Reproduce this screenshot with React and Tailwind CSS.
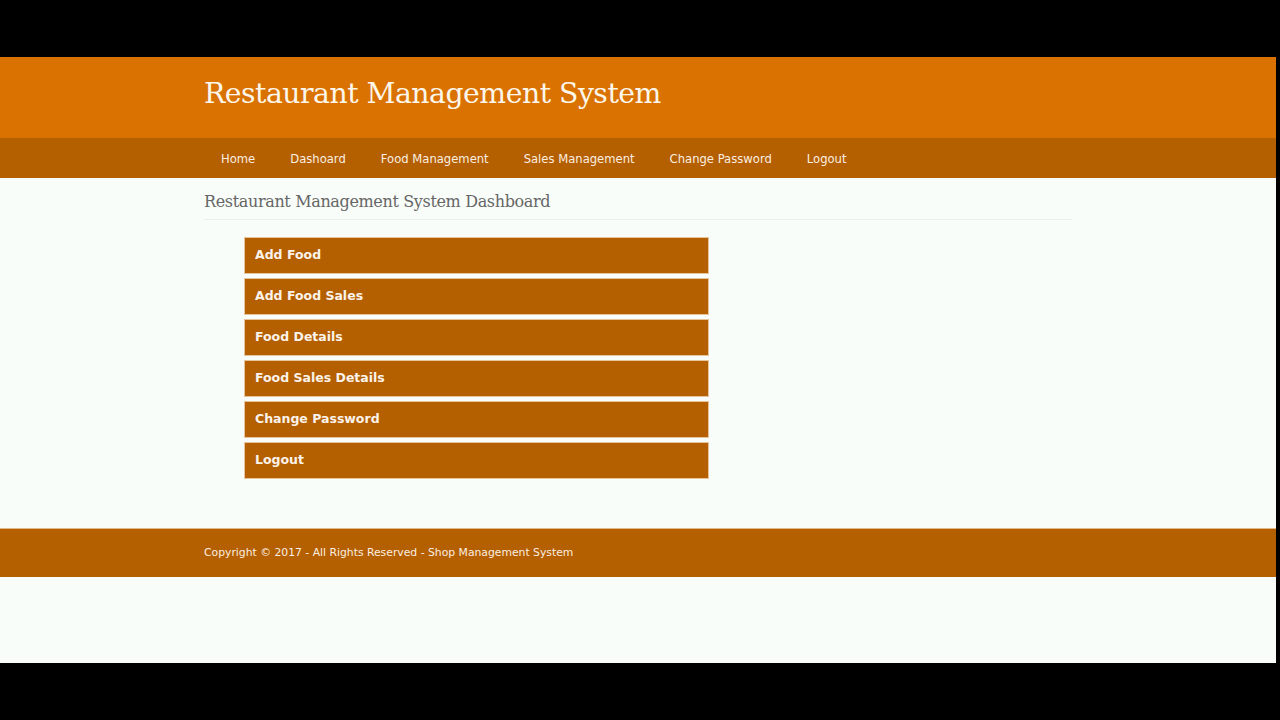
const navLinks = ["Home", "Dashoard", "Food Management", "Sales Management", "Change Password", "Logout"];

const menuItems = ["Add Food", "Add Food Sales", "Food Details", "Food Sales Details", "Change Password", "Logout"];

const App = () => {
  return (
    <div className="h-[720px] bg-black flex flex-col">
      <div className="h-[57px]" />
      <div className="w-[1276px] h-[606px] bg-[#f8fdfa] flex flex-col">
        <header className="h-[81px] bg-[#d97200] flex items-center">
          <div className="w-[868px] mx-auto">
            <h1 className="text-[28.3px] text-[#fdf6ea] font-['DejaVu_Serif',Georgia,serif] tracking-[-0.5px] pb-[6px]">
              Restaurant Management System
            </h1>
          </div>
        </header>
        <nav className="h-[40px] bg-[#b45f00]">
          <ul className="w-[868px] mx-auto flex h-full items-center pt-[3px] pl-[17px] gap-[35px] font-['DejaVu_Sans',Verdana,sans-serif] text-[11.6px] text-[#fbeee0]">
            {navLinks.map((link) => (
              <li key={link}>
                <a href="#">{link}</a>
              </li>
            ))}
          </ul>
        </nav>
        <main className="h-[350px]">
          <div className="w-[868px] mx-auto pt-[12px]">
            <h2 className="text-[16px] text-[#666] font-['DejaVu_Serif',Georgia,serif] tracking-[-0.35px] pb-[5px] border-b border-[#ebefed]">
              Restaurant Management System Dashboard
            </h2>
            <div className="ml-[40px] mt-[17px] w-[465px] flex flex-col gap-[4px]">
              {menuItems.map((item) => (
                <a
                  key={item}
                  href="#"
                  className="h-[37px] flex items-center pl-[10px] bg-[#b45f00] border border-[#e8c49c] text-[#fbf3ea] font-bold text-[12.5px] font-['DejaVu_Sans',Verdana,sans-serif]"
                >
                  {item}
                </a>
              ))}
            </div>
          </div>
        </main>
        <footer className="h-[49px] bg-[#b45f00] border-t border-[#e4b98a] flex items-center">
          <div className="w-[868px] mx-auto text-[10.8px] text-[#fbeee0] font-['DejaVu_Sans',Verdana,sans-serif]">
            Copyright © 2017 - All Rights Reserved - Shop Management System
          </div>
        </footer>
        <div className="flex-1" />
      </div>
    </div>
  );
};

export default App;
